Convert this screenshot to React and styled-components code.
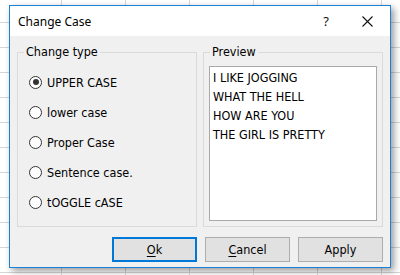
import styled, { createGlobalStyle } from "styled-components";

const GlobalStyle = createGlobalStyle`
    html, body {
        margin: 0;
        padding: 0;
    }
    body {
        width: 400px;
        height: 275px;
        overflow: hidden;
        background-color: #ffffff;
        background-image:
            linear-gradient(to right, #d6d6d6 1px, transparent 1px),
            linear-gradient(to bottom, #d6d6d6 1px, transparent 1px);
        background-size: 64px 100%, 100% 25px;
        background-position: 61px 0, 0 22px;
        font-family: "DejaVu Sans Condensed", "DejaVu Sans", sans-serif;
    }
`

const options = ["UPPER CASE", "lower case", "Proper Case", "Sentence case.", "tOGGLE cASE"];
const preview = ["I LIKE JOGGING", "WHAT THE HELL", "HOW ARE YOU", "THE GIRL IS PRETTY"];

export default function App() {
    return (
        <>
            <GlobalStyle />
            <Desktop>
                <Dialog>
                    <TitleBar>
                        <Title>Change Case</Title>
                        <TitleButtons>
                            <Help>?</Help>
                            <Close>
                                <svg width="11" height="11" viewBox="0 0 11 11">
                                    <path d="M0.5 0.5 L10.5 10.5 M10.5 0.5 L0.5 10.5" stroke="#111" strokeWidth="1.1" fill="none" />
                                </svg>
                            </Close>
                        </TitleButtons>
                    </TitleBar>
                    <Body>
                        <Groups>
                            <Group>
                                <Legend>Change type</Legend>
                                <OptionList>
                                    {options.map((o, i) => (
                                        <Option key={o}>
                                            <Radio checked={i === 0} />
                                            <span>{o}</span>
                                        </Option>
                                    ))}
                                </OptionList>
                            </Group>
                            <Group>
                                <Legend>Preview</Legend>
                                <PreviewBox>
                                    {preview.map(l => <Line key={l}>{l}</Line>)}
                                </PreviewBox>
                            </Group>
                        </Groups>
                        <Buttons>
                            <Button $default><u>O</u>k</Button>
                            <Button><u>C</u>ancel</Button>
                            <Button>Apply</Button>
                        </Buttons>
                    </Body>
                </Dialog>
            </Desktop>
        </>
    )
}

const Desktop = styled.div`
    padding: 5px 0 0 9px;
`

const Dialog = styled.div`
    width: 382px;
    height: 263px;
    box-sizing: border-box;
    border: 1px solid #1a80d8;
    background: #f0f0f0;
    box-shadow: 3px 3px 7px rgba(0, 0, 0, 0.4);
    display: flex;
    flex-direction: column;
`

const TitleBar = styled.div`
    height: 30px;
    background: #ffffff;
    display: flex;
    align-items: center;
    justify-content: space-between;
    padding-left: 8px;
`

const Title = styled.span`
    font-family: "Noto Sans", sans-serif;
    font-size: 12px;
    color: #000;
`

const TitleButtons = styled.div`
    display: flex;
    align-items: center;
    height: 100%;
`

const Help = styled.span`
    font-family: "Noto Sans", sans-serif;
    font-size: 13px;
    width: 24px;
    text-align: center;
    color: #111;
`

const Close = styled.span`
    width: 46px;
    height: 100%;
    display: flex;
    align-items: center;
    justify-content: center;
    margin-left: 6px;
`

const Body = styled.div`
    flex: 1;
    display: flex;
    flex-direction: column;
    padding: 9px 7px 5px 7px;
`

const Groups = styled.div`
    display: flex;
    gap: 6px;
`

const Group = styled.fieldset`
    margin: 0;
    padding: 0;
    min-width: 0;
    width: 180px;
    height: 182px;
    box-sizing: border-box;
    border: 1px solid #dadada;
`

const Legend = styled.legend`
    margin-left: 6px;
    padding: 0 2px;
    font-size: 12.5px;
    line-height: 14px;
    color: #000;
`

const OptionList = styled.div`
    display: flex;
    flex-direction: column;
    padding: 8px 0 0 11px;
`

const Option = styled.div`
    height: 30px;
    display: flex;
    align-items: center;
    gap: 5px;
    font-size: 12.5px;
    color: #000;
`

const Radio = styled.span`
    width: 13px;
    height: 13px;
    box-sizing: border-box;
    border-radius: 50%;
    border: 1px solid #333;
    background: #fff;
    display: flex;
    align-items: center;
    justify-content: center;
    &::after {
        content: "";
        width: 6px;
        height: 6px;
        border-radius: 50%;
        background: ${p => p.checked ? "#333" : "transparent"};
    }
`

const PreviewBox = styled.div`
    margin: 7px 0 0 5px;
    width: 168px;
    height: 155px;
    box-sizing: border-box;
    border: 1px solid #a9a9a9;
    background: #fff;
    padding: 1px 3px;
`

const Line = styled.div`
    font-size: 12.5px;
    line-height: 19px;
    color: #000;
    white-space: nowrap;
`

const Buttons = styled.div`
    margin-top: auto;
    display: flex;
    justify-content: flex-end;
    gap: 8px;
`

const Button = styled.button`
    width: 85px;
    height: 25px;
    box-sizing: border-box;
    padding: 0;
    background: #e1e1e1;
    border: ${p => p.$default ? "2px solid #0078d7" : "1px solid #adadad"};
    font-family: inherit;
    font-size: 12.5px;
    color: #000;
    u {
        text-underline-offset: 2px;
    }
`
